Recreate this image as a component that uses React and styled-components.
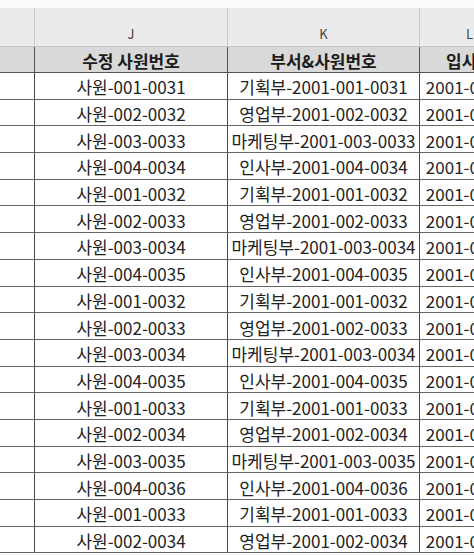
import React from "react";
import styled, { createGlobalStyle } from "styled-components";

const GlobalStyle = createGlobalStyle`
  html, body {
    margin: 0;
    padding: 0;
    background: #ffffff;
    overflow: hidden;
  }
  body {
    font-family: "Noto Sans CJK KR", "Noto Sans", sans-serif;
  }
`;

const rows = [
  ["사원-001-0031", "기획부-2001-001-0031"],
  ["사원-002-0032", "영업부-2001-002-0032"],
  ["사원-003-0033", "마케팅부-2001-003-0033"],
  ["사원-004-0034", "인사부-2001-004-0034"],
  ["사원-001-0032", "기획부-2001-001-0032"],
  ["사원-002-0033", "영업부-2001-002-0033"],
  ["사원-003-0034", "마케팅부-2001-003-0034"],
  ["사원-004-0035", "인사부-2001-004-0035"],
  ["사원-001-0032", "기획부-2001-001-0032"],
  ["사원-002-0033", "영업부-2001-002-0033"],
  ["사원-003-0034", "마케팅부-2001-003-0034"],
  ["사원-004-0035", "인사부-2001-004-0035"],
  ["사원-001-0033", "기획부-2001-001-0033"],
  ["사원-002-0034", "영업부-2001-002-0034"],
  ["사원-003-0035", "마케팅부-2001-003-0035"],
  ["사원-004-0036", "인사부-2001-004-0036"],
  ["사원-001-0033", "기획부-2001-001-0033"],
  ["사원-002-0034", "영업부-2001-002-0034"],
];

export default function App() {
  return (
    <>
      <GlobalStyle />
      <Page>
        <Sheet>
          <LetterCell />
          <LetterCell>J</LetterCell>
          <LetterCell>K</LetterCell>
          <LetterCell>L</LetterCell>

          <HeadCell />
          <HeadCell>수정 사원번호</HeadCell>
          <HeadCell>부서&amp;사원번호</HeadCell>
          <HeadCell>입사일</HeadCell>

          {rows.map(([emp, dept], i) => (
            <React.Fragment key={i}>
              <Cell />
              <Cell>{emp}</Cell>
              <Cell>{dept}</Cell>
              <Cell>2001-01-01</Cell>
            </React.Fragment>
          ))}
        </Sheet>
      </Page>
    </>
  );
}

const Page = styled.div`
  width: 474px;
  height: 555px;
  overflow: hidden;
  padding-top: 8px;
  box-sizing: border-box;
  background: #fbfbfb;
`;

const Sheet = styled.div`
  display: grid;
  grid-template-columns: 35px 193px 192px 100px;
  grid-template-rows: 39px 26px;
  grid-auto-rows: 26.7px;
  width: 520px;
`;

const BaseCell = styled.div`
  display: flex;
  align-items: center;
  justify-content: center;
  box-sizing: border-box;
  white-space: nowrap;
  overflow: hidden;
`;

const LetterCell = styled(BaseCell)`
  background: #ebebeb;
  border-right: 1px solid #cbcbcb;
  border-bottom: 1px solid #c4c4c4;
  color: #444;
  font-size: 13px;
  padding-top: 12px;
`;

const HeadCell = styled(BaseCell)`
  background: #d9d9d9;
  border-right: 1px solid #555;
  border-bottom: 1px solid #555;
  color: #1c1c1c;
  font-size: 17px;
  font-weight: 700;
  padding-top: 2px;
`;

const Cell = styled(BaseCell)`
  background: #ffffff;
  border-right: 1px solid #4a4a4a;
  border-bottom: 1px solid #666;
  color: #222;
  font-size: 17px;
  padding-top: 2px;
`;
